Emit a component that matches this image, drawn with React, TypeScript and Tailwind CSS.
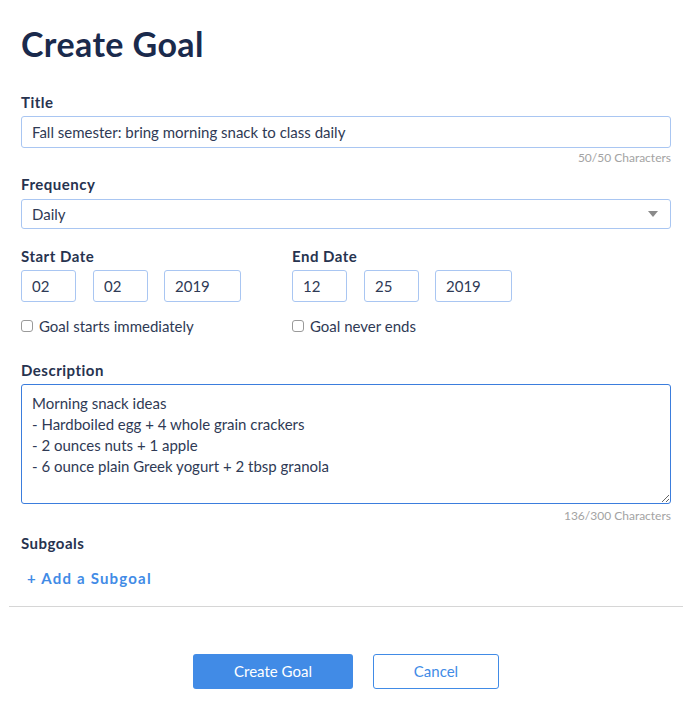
import { useState } from "react";

const LABEL = "block text-[15px] font-bold leading-[20px] tracking-[0.5px] text-[#27334f]";
const FIELD =
  "block rounded-[3px] border border-[#a9c6f2] bg-white px-[10px] text-[15px] text-[#2f3a55] outline-none";
const COUNTER = "mt-[3px] text-right text-[12px] leading-[14px] text-[#a3a3a3]";

function Checkbox({ label }: { label: string }) {
  const [checked, setChecked] = useState(false);
  return (
    <label className="flex cursor-pointer items-center gap-[6px] text-[15px] leading-[20px] text-[#2f3a55]">
      <span
        onClick={() => setChecked(!checked)}
        className={`h-[12px] w-[12px] rounded-[3px] border border-[#9a9a9a] ${checked ? "bg-[#418be6]" : "bg-white"}`}
      />
      {label}
    </label>
  );
}

interface DateFieldsProps {
  label: string;
  month: string;
  day: string;
  year: string;
  check: string;
}

function DateFields({ label, month, day, year, check }: DateFieldsProps) {
  return (
    <div className="w-[271px]">
      <span className={LABEL}>{label}</span>
      <div className="mt-[4px] flex">
        <input defaultValue={month} className={`${FIELD} h-[32px] w-[55px]`} />
        <input defaultValue={day} className={`${FIELD} ml-[17px] h-[32px] w-[55px]`} />
        <input defaultValue={year} className={`${FIELD} ml-[16px] h-[32px] w-[77px]`} />
      </div>
      <div className="mt-[14px]">
        <Checkbox label={check} />
      </div>
    </div>
  );
}

export default function App() {
  return (
    <div className="min-h-[711px] w-[698px] bg-white pl-[21px] pr-[27px] pt-[24px] font-['Lato','Liberation_Sans',sans-serif] antialiased">
      <h1 className="text-[34px] font-bold leading-[40px] tracking-[0.4px] text-[#1a2a4c]">Create Goal</h1>

      <label className={`${LABEL} mt-[28px]`}>Title</label>
      <input
        defaultValue="Fall semester: bring morning snack to class daily"
        className={`${FIELD} mt-[4px] h-[32px] w-full`}
      />
      <div className={COUNTER}>50/50 Characters</div>

      <label className={`${LABEL} mt-[9px]`}>Frequency</label>
      <div className={`${FIELD} mt-[5px] flex h-[30px] w-full items-center justify-between pr-[12px]`}>
        <span>Daily</span>
        <svg width="10" height="6" viewBox="0 0 10 6">
          <path d="M0 0h10L5 6z" fill="#8a8a8a" />
        </svg>
      </div>

      <div className="mt-[17px] flex">
        <DateFields label="Start Date" month="02" day="02" year="2019" check="Goal starts immediately" />
        <DateFields label="End Date" month="12" day="25" year="2019" check="Goal never ends" />
      </div>

      <label className={`${LABEL} mt-[24px]`}>Description</label>
      <textarea
        defaultValue={
          "Morning snack ideas\n- Hardboiled egg + 4 whole grain crackers\n- 2 ounces nuts + 1 apple\n- 6 ounce plain Greek yogurt + 2 tbsp granola"
        }
        className="mt-[4px] block h-[120px] w-full resize-y rounded-[3px] border border-[#3b7ddd] px-[10px] py-[8px] text-[15px] leading-[21px] text-[#2f3a55] outline-none"
      />
      <div className={`${COUNTER} mt-[5px]`}>136/300 Characters</div>

      <span className={`${LABEL} mt-[10px] tracking-[0.2px]`}>Subgoals</span>
      <button className="mt-[15px] ml-[6px] block text-[15px] font-bold leading-[20px] tracking-[1.2px] text-[#418be6]">
        + Add a Subgoal
      </button>

      <div className="ml-[-12px] mr-[-12px] mt-[18px] h-px bg-[#d6d6d6]" />

      <div className="mt-[47px] flex justify-center gap-[20px]">
        <button className="h-[35px] w-[160px] rounded-[3px] bg-[#418be6] text-[15px] text-white">Create Goal</button>
        <button className="h-[35px] w-[126px] rounded-[3px] border border-[#418be6] bg-white text-[15px] text-[#418be6]">
          Cancel
        </button>
      </div>
    </div>
  );
}
